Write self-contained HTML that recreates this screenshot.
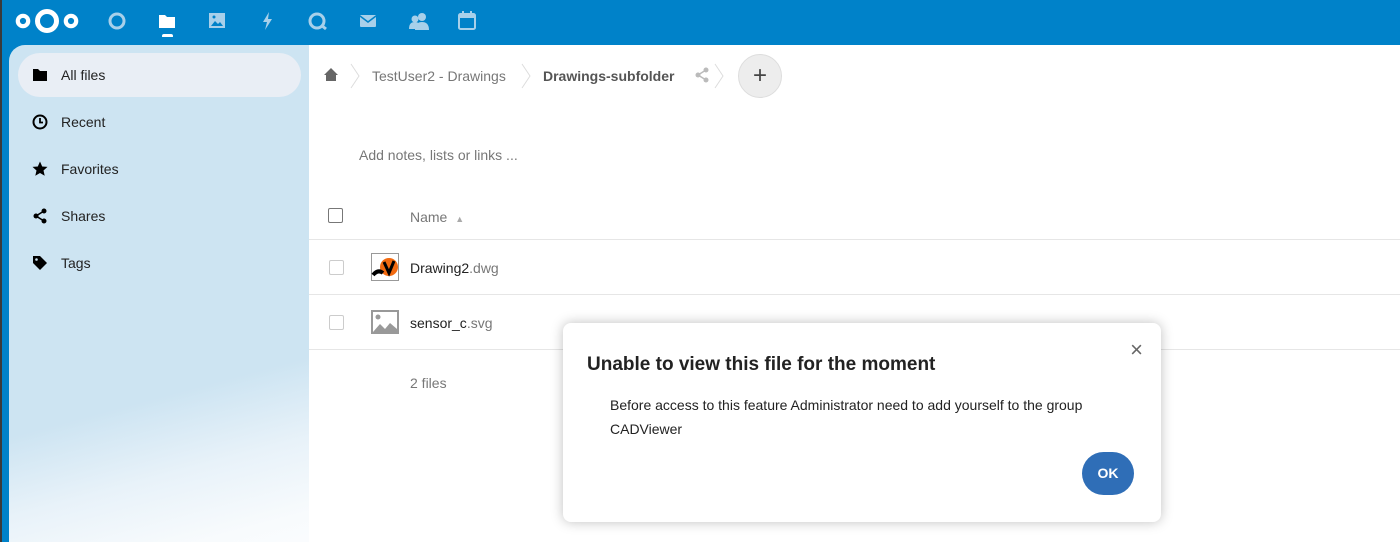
<!DOCTYPE html>
<html><head><meta charset="utf-8"><style>
*{box-sizing:border-box;margin:0;padding:0}
body{width:1400px;height:542px;overflow:hidden;background:#0082c9;font-family:"Liberation Sans",sans-serif;position:relative}
.edge{position:absolute;left:0;top:0;width:2px;height:542px;background:#3a3a3a}
.hdr{position:absolute;left:2px;top:0;right:0;height:45px;background:#0082c9}
.ic{position:absolute;top:11px}
.side{position:absolute;left:9px;top:45px;width:300px;height:497px;border-top-left-radius:16px;background:linear-gradient(165deg,#cde4f2 0%,#cde4f2 68%,#e8f2f9 82%,#f8fbfd 95%,#fafcfe 100%)}
.nav{position:absolute;left:9px;height:44px;width:283px;border-radius:22px;font-size:14px;color:#222;line-height:44px;padding-left:43px}
.nav.act{background:#e9eef5}
.nav svg{position:absolute;left:14px;top:14px}
.main{position:absolute;left:309px;top:45px;right:0;bottom:0;background:#fff}
.t{position:absolute;font-size:14px;color:#222}
.g{color:#777}
.line{position:absolute;left:309px;right:0;height:1px;background:#e6e6e6}
.cb{position:absolute;width:15px;height:15px;border:1px solid #ccc;border-radius:2px;background:#fff}
.dlg{position:absolute;left:563px;top:323px;width:598px;height:199px;background:#fff;border-radius:8px;box-shadow:0 0 12px rgba(0,0,0,.25)}
</style></head><body>
<div class="edge"></div>
<div class="hdr">
<svg class="ic" style="left:13px;top:7px" width="64" height="28" viewBox="0 0 64 28"><circle cx="32" cy="14" r="9.5" fill="none" stroke="#fff" stroke-width="5"/><circle cx="8" cy="14" r="5.2" fill="none" stroke="#fff" stroke-width="4.2"/><circle cx="56" cy="14" r="5.2" fill="none" stroke="#fff" stroke-width="4.2"/></svg>
<svg class="ic" style="left:105px" width="20" height="20"><circle cx="10" cy="10" r="7" fill="none" stroke="#a8d0ea" stroke-width="3"/></svg>
<svg class="ic" style="left:155px" width="20" height="26"><path d="M2 4h6l2 2h8v11H2z" fill="#fff"/><rect x="5" y="23" width="11" height="4" rx="2" fill="#fff"/></svg>
<svg class="ic" style="left:205px" width="20" height="20"><rect x="2" y="2" width="16" height="15" fill="#a8d0ea"/><path d="M4 15l4-5 3 3 2-2 3 4z" fill="#0082c9"/><circle cx="7" cy="6" r="1.5" fill="#0082c9"/></svg>
<svg class="ic" style="left:258px" width="16" height="20"><path d="M9 1L3 11h4l-2 8 7-11H8z" fill="#a8d0ea"/></svg>
<svg class="ic" style="left:305px" width="22" height="20"><circle cx="10" cy="10" r="7" fill="none" stroke="#a8d0ea" stroke-width="3"/><path d="M14 14l5 4" stroke="#a8d0ea" stroke-width="3"/></svg>
<svg class="ic" style="left:356px" width="20" height="20"><rect x="2" y="4" width="16" height="12" rx="1" fill="#a8d0ea"/><path d="M2 5l8 6 8-6" fill="none" stroke="#0082c9" stroke-width="1.5"/></svg>
<svg class="ic" style="left:405px" width="24" height="20"><circle cx="15" cy="6" r="4" fill="#a8d0ea"/><path d="M8 19c0-6 3-8 7-8s7 2 7 8z" fill="#a8d0ea"/><circle cx="8" cy="8" r="3.5" fill="#a8d0ea"/><path d="M2 18c0-5 2-7 6-7s4 2 4 7z" fill="#a8d0ea"/></svg>
<svg class="ic" style="left:455px" width="20" height="20"><rect x="2" y="3" width="16" height="15" rx="1.5" fill="none" stroke="#a8d0ea" stroke-width="2"/><rect x="2" y="3" width="16" height="4" fill="#a8d0ea"/><rect x="5" y="0" width="2" height="5" fill="#a8d0ea"/><rect x="13" y="0" width="2" height="5" fill="#a8d0ea"/></svg>
</div>
<div class="side">
<div class="nav act" style="top:8px"><svg width="16" height="16"><path d="M1 2h5l2 2h7v10H1z" fill="#000"/></svg>All files</div>
<div class="nav" style="top:55px"><svg width="16" height="16"><circle cx="8" cy="8" r="6.5" fill="none" stroke="#000" stroke-width="2"/><path d="M8 4v4.5h3" fill="none" stroke="#000" stroke-width="1.8"/></svg>Recent</div>
<div class="nav" style="top:102px"><svg width="16" height="16"><path d="M8 0.5l2.2 5 5.3.4-4 3.6 1.2 5.3L8 12 3.3 14.8l1.2-5.3-4-3.6 5.3-.4z" fill="#000"/></svg>Favorites</div>
<div class="nav" style="top:149px"><svg width="16" height="16"><circle cx="12" cy="3" r="2.5"/><circle cx="4" cy="8" r="2.5"/><circle cx="12" cy="13" r="2.5"/><path d="M12 3L4 8l8 5" fill="none" stroke="#000" stroke-width="1.6"/></svg>Shares</div>
<div class="nav" style="top:196px"><svg width="16" height="16"><path d="M1 1h7l7 7-7 7-7-7z" fill="#000"/><circle cx="4.5" cy="4.5" r="1.3" fill="#cde4f2"/></svg>Tags</div>
</div>
<div class="main"></div>
<svg style="position:absolute;left:323px;top:67px" width="16" height="16"><path d="M8 1l7 7h-2v6H3V8H1z" fill="#666"/></svg>
<svg style="position:absolute;left:349px;top:63px" width="12" height="26"><path d="M2 1l8 12-8 12" fill="none" stroke="#ddd" stroke-width="1"/></svg>
<div class="t g" style="left:372px;top:68px">TestUser2 - Drawings</div>
<svg style="position:absolute;left:520px;top:63px" width="12" height="26"><path d="M2 1l8 12-8 12" fill="none" stroke="#ddd" stroke-width="1"/></svg>
<div class="t" style="left:543px;top:68px;font-weight:bold;color:#555">Drawings-subfolder</div>
<svg style="position:absolute;left:694px;top:67px" width="16" height="16"><circle cx="12" cy="3" r="2.5" fill="#bbb"/><circle cx="4" cy="8" r="2.5" fill="#bbb"/><circle cx="12" cy="13" r="2.5" fill="#bbb"/><path d="M12 3L4 8l8 5" fill="none" stroke="#bbb" stroke-width="1.5"/></svg>
<svg style="position:absolute;left:713px;top:63px" width="12" height="26"><path d="M2 1l8 12-8 12" fill="none" stroke="#ddd" stroke-width="1"/></svg>
<div style="position:absolute;left:738px;top:54px;width:44px;height:44px;border-radius:22px;background:#ededed;border:1px solid #ddd;text-align:center;line-height:42px;font-size:24px;color:#444">+</div>
<div class="t g" style="left:359px;top:147px">Add notes, lists or links ...</div>
<div class="cb" style="left:328px;top:208px;border-color:#777"></div>
<div class="t g" style="left:410px;top:209px">Name <span style="font-size:9px;color:#aaa;margin-left:4px">▲</span></div>
<div class="line" style="top:239px"></div>
<div class="cb" style="left:329px;top:260px"></div>
<svg style="position:absolute;left:371px;top:253px" width="28" height="28"><rect x="0.5" y="0.5" width="27" height="27" fill="#fff" stroke="#999"/><circle cx="18" cy="14" r="9" fill="#f26a10"/><path d="M13 9l5 11 5-12" fill="none" stroke="#000" stroke-width="3"/><path d="M2 22q5-6 10-2" fill="none" stroke="#000" stroke-width="4"/></svg>
<div class="t" style="left:410px;top:260px">Drawing2<span class="g">.dwg</span></div>
<div class="line" style="top:294px"></div>
<div class="cb" style="left:329px;top:315px"></div>
<svg style="position:absolute;left:371px;top:310px" width="28" height="24"><rect width="28" height="24" fill="#999"/><rect x="2" y="2" width="24" height="20" fill="#fff"/><path d="M2 22l7-8 5 5 5-6 7 6v3z" fill="#999"/><circle cx="7" cy="7" r="2.5" fill="#999"/></svg>
<div class="t" style="left:410px;top:315px">sensor_c<span class="g">.svg</span></div>
<div class="line" style="top:349px"></div>
<div class="t g" style="left:410px;top:375px">2 files</div>
<div class="dlg">
<div style="position:absolute;left:24px;top:31px;font-size:19px;font-weight:bold;color:#222">Unable to view this file for the moment</div>
<div style="position:absolute;right:18px;top:14px;font-size:22px;color:#666">×</div>
<div style="position:absolute;left:47px;top:70px;font-size:14px;color:#222;line-height:24px;width:520px">Before access to this feature Administrator need to add yourself to the group CADViewer</div>
<div style="position:absolute;left:519px;top:129px;width:52px;height:43px;border-radius:22px;background:#2f6eb7;color:#fff;font-weight:bold;font-size:14px;text-align:center;line-height:43px">OK</div>
</div>
</body></html>
